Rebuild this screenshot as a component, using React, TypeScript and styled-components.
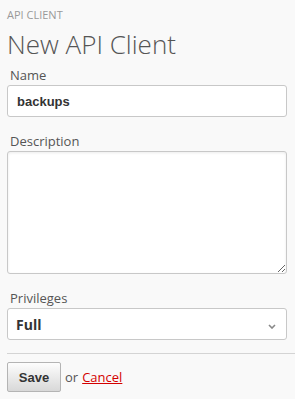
import React from "react";
import styled, { createGlobalStyle } from "styled-components";

const GlobalStyle = createGlobalStyle`
    html, body {
        margin: 0;
        padding: 0;
        background: #f9f9f9;
    }
    body {
        font-family: "Open Sans", "Liberation Sans", sans-serif;
        color: #555;
    }
`;

const Page = styled.div`
    padding: 8px 0 0 7px;
    overflow: hidden;
`;

const Crumb = styled.div`
    font-size: 11px;
    line-height: 14px;
    color: #999;
    text-transform: uppercase;
`;

const Title = styled.h1`
    margin: 7px 0 0 0;
    font-size: 26px;
    line-height: 30px;
    font-weight: 300;
    color: #555;
`;

const Form = styled.form`
    margin-top: 8px;
    width: 280px;
`;

const Field = styled.div`
    margin-bottom: 16px;
`;

const Label = styled.label`
    display: block;
    padding-left: 3px;
    font-size: 13px;
    line-height: 16px;
    color: #555;
    margin-bottom: 2px;
`;

const TextInput = styled.input`
    box-sizing: border-box;
    display: block;
    width: 280px;
    height: 32px;
    padding: 0 9px;
    border: 1px solid #c8c8c8;
    border-radius: 3px;
    background: #fff;
    font-family: "Liberation Sans", Arial, sans-serif;
    font-weight: bold;
    font-size: 13px;
    color: #333;
    outline: none;
`;

const TextArea = styled.textarea`
    box-sizing: border-box;
    display: block;
    width: 280px;
    height: 123px;
    border: 1px solid #c8c8c8;
    border-radius: 3px;
    background: #fff;
    box-shadow: inset 0 1px 3px rgba(0, 0, 0, 0.08);
    outline: none;
`;

const SelectWrap = styled.div`
    position: relative;
    width: 280px;
`;

const Select = styled.select`
    box-sizing: border-box;
    display: block;
    width: 280px;
    height: 32px;
    padding: 0 8px;
    border: 1px solid #c8c8c8;
    border-radius: 3px;
    background: #fff;
    appearance: none;
    font-family: "Open Sans", "Liberation Sans", sans-serif;
    font-weight: bold;
    font-size: 14px;
    color: #333;
    outline: none;
`;

const Chevron = styled.svg`
    position: absolute;
    right: 11px;
    top: 16px;
    pointer-events: none;
`;

const Rule = styled.hr`
    margin: -3px 0 0 0;
    width: 300px;
    border: none;
    border-top: 1px solid #d4d4d4;
`;

const Actions = styled.div`
    display: flex;
    align-items: center;
    gap: 4px;
    margin-top: 8px;
    font-size: 13px;
    color: #555;
`;

const SaveButton = styled.button`
    box-sizing: border-box;
    width: 54px;
    height: 30px;
    border: 1px solid #b4b4b4;
    border-radius: 2px;
    background: linear-gradient(#fdfdfd, #d8d8d8);
    font-family: "Liberation Sans", Arial, sans-serif;
    font-weight: bold;
    font-size: 13px;
    color: #333;
    padding: 0;
`;

const CancelLink = styled.a`
    color: #d40000;
    text-decoration: underline;
`;

export default function App() {
    return (
        <Page>
            <GlobalStyle />
            <Crumb>API Client</Crumb>
            <Title>New API Client</Title>
            <Form>
                <Field>
                    <Label>Name</Label>
                    <TextInput defaultValue="backups" />
                </Field>
                <Field>
                    <Label>Description</Label>
                    <TextArea />
                </Field>
                <Field>
                    <Label>Privileges</Label>
                    <SelectWrap>
                        <Select defaultValue="full">
                            <option value="full">Full</option>
                            <option value="read">Read only</option>
                        </Select>
                        <Chevron width="8" height="5" viewBox="0 0 8 5">
                            <path d="M1 1l3 3 3-3" fill="none" stroke="#888" strokeWidth="1.6" />
                        </Chevron>
                    </SelectWrap>
                </Field>
            </Form>
            <Rule />
            <Actions>
                <SaveButton type="button">Save</SaveButton>
                <span>or</span>
                <CancelLink href="#">Cancel</CancelLink>
            </Actions>
        </Page>
    );
}
